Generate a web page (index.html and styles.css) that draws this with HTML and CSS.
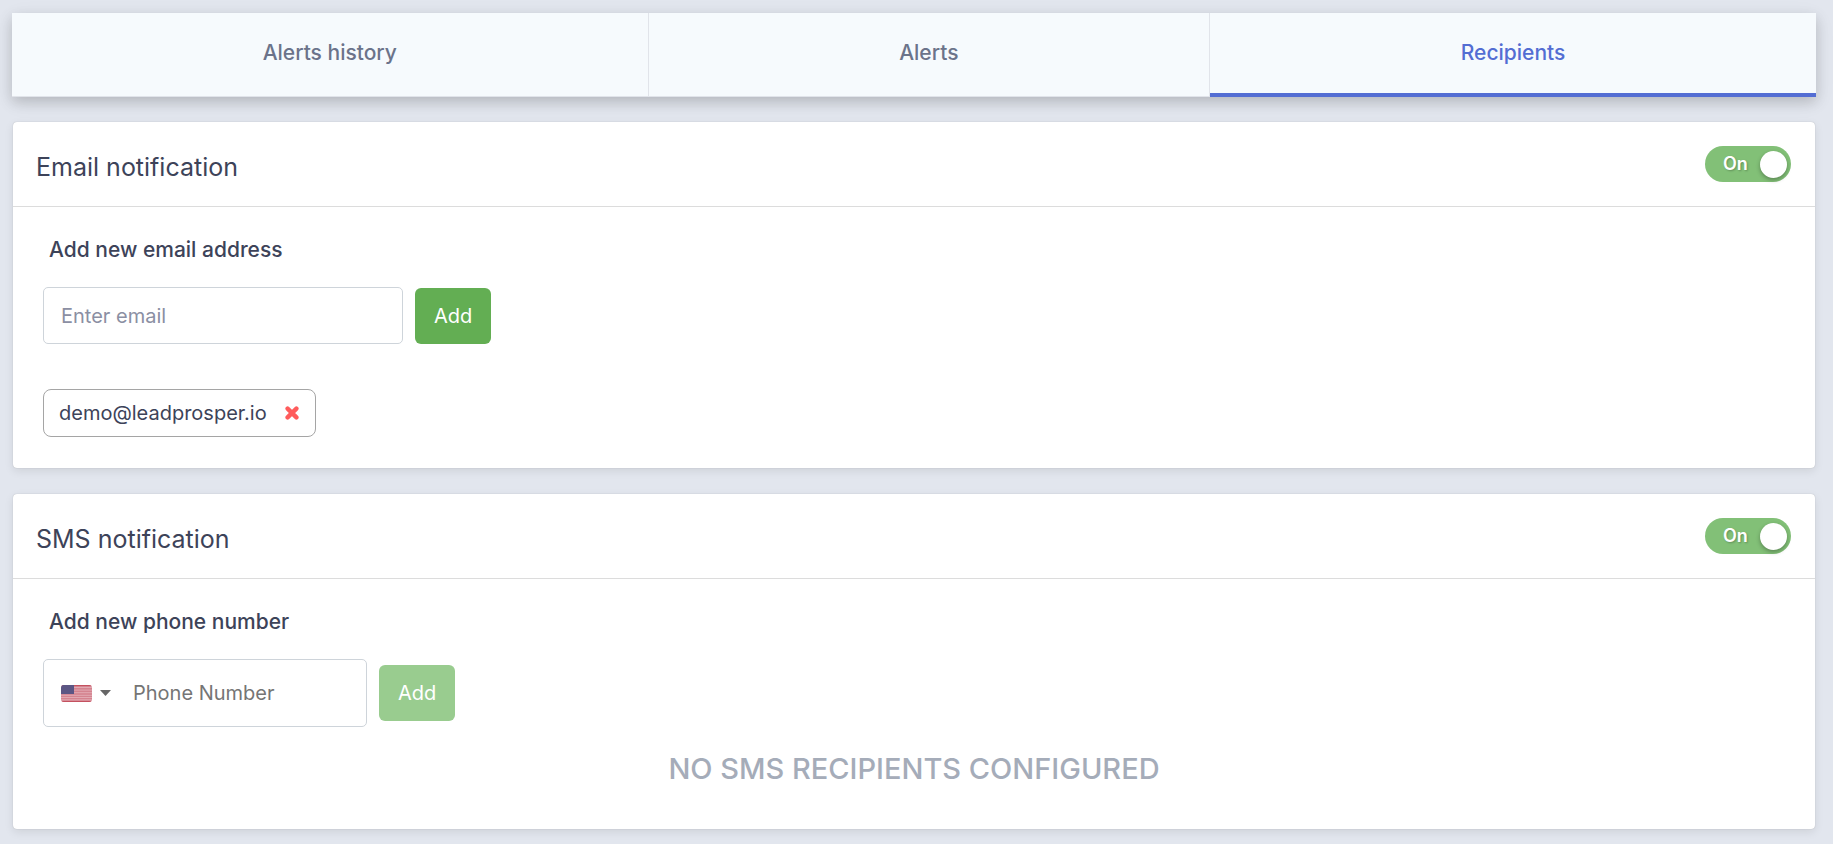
FILE: index.html
```html
<!DOCTYPE html>
<html lang="en">
<head>
    <meta charset="UTF-8">
    <meta name="viewport" content="width=device-width, initial-scale=1">
    <title>Recipients</title>
    <link rel="stylesheet" href="styles.css">
</head>
<body>
    <nav class="tabs">
        <a href="#history" class="tab">Alerts history</a>
        <a href="#alerts" class="tab">Alerts</a>
        <a href="#recipients" class="tab active" aria-current="page">Recipients</a>
    </nav>

    <main>
        <!-- Email -->
        <section class="card">
            <div class="card-header">
                <h2>Email notification</h2>
                <label class="switch">
                    <input type="checkbox" aria-label="Email notification" checked>
                    <span class="switch-text">On</span>
                    <span class="switch-knob"></span>
                </label>
            </div>
            <div class="card-body">
                <form class="add-form">
                    <label class="form-label" for="email">Add new email address</label>
                    <div class="form-row">
                        <input type="email" id="email" class="form-control" placeholder="Enter email">
                        <button type="button" class="btn">Add</button>
                    </div>
                </form>
                <div class="chips">
                    <div class="chip">
                        <span>demo@leadprosper.io</span>
                        <button type="button" class="chip-remove" aria-label="Remove">
                            <svg width="14" height="14" viewBox="0 0 14 14">
                                <path d="M2.6 2.6L11.4 11.4M11.4 2.6L2.6 11.4" stroke="#ff5c5c" stroke-width="4.4" stroke-linecap="round"/>
                            </svg>
                        </button>
                    </div>
                </div>
            </div>
        </section>

        <!-- SMS -->
        <section class="card">
            <div class="card-header">
                <h2>SMS notification</h2>
                <label class="switch">
                    <input type="checkbox" aria-label="SMS notification" checked>
                    <span class="switch-text">On</span>
                    <span class="switch-knob"></span>
                </label>
            </div>
            <div class="card-body">
                <form class="add-form">
                    <label class="form-label" for="phone">Add new phone number</label>
                    <div class="form-row">
                        <div class="phone-control">
                            <div class="country">
                                <svg class="flag" width="31" height="17" viewBox="0 0 31 17">
                                    <clipPath id="flag-clip"><rect width="31" height="17" rx="3"/></clipPath>
                                    <g clip-path="url(#flag-clip)">
                                        <rect width="31" height="17" fill="#d4838f"/>
                                        <path d="M0 .5H31M0 16.5H31" stroke="#c4515f"/>
                                        <path d="M0 2.5H31M0 5.1H31M0 7.7H31M0 10.3H31M0 12.5H31M0 14.8H31" stroke="#e6b3bb" stroke-width=".8"/>
                                        <rect width="13" height="9" fill="#5c5684"/>
                                    </g>
                                </svg>
                                <svg class="caret" width="11" height="6" viewBox="0 0 11 6">
                                    <path d="M0 0H11L5.5 6Z" fill="#666"/>
                                </svg>
                                <select aria-label="Country">
                                    <option>United States</option>
                                </select>
                            </div>
                            <input type="tel" id="phone" placeholder="Phone Number">
                        </div>
                        <button type="button" class="btn" disabled>Add</button>
                    </div>
                </form>
                <p class="empty">NO SMS RECIPIENTS CONFIGURED</p>
            </div>
        </section>
    </main>
</body>
</html>
```
FILE: styles.css
```css
* {
    box-sizing: border-box;
}
body {
    margin: 0;
    padding: 13px 17px 15px 12px;
    background-color: #e2e6ee;
    color: #3d4359;
    font-family: Inter, "Liberation Sans", sans-serif;
    font-size: 20px;
    line-height: 30px;
}
input, button, select {
    font: inherit;
}
.tabs {
    display: flex;
    height: 84px;
    margin-bottom: 25px;
    background-color: #f6fafd;
    box-shadow: 0 5px 20px rgba(0,0,0,0.07), 0 5px 12px rgba(0,0,0,0.15);
}
.tab {
    flex: 1 1 auto;
    padding-top: 25px;
    border-right: 1px solid #e1e4ea;
    border-bottom: 1px solid #e1e4ea;
    color: #6b738a;
    font-size: 21px;
    font-weight: 500;
    text-align: center;
    text-decoration: none;
}
.tab.active {
    border-right: 0;
    border-bottom: 4px solid #536dd3;
    color: #536dd3;
}
main {
    display: flex;
    flex-direction: column;
    gap: 26px;
    margin: 0 1px;
}
.card {
    background-color: white;
    border-radius: 4px;
    box-shadow: 0 0 1px rgba(0,0,0,0.25), 0 3px 10px rgba(0,0,0,0.09);
}
.card-header {
    display: flex;
    justify-content: space-between;
    align-items: center;
    height: 85px;
    padding: 0 24px 0 23px;
    border-bottom: 1px solid #dcdcdc;
}
h2 {
    margin: 5px 0 0;
    font-size: 25px;
    font-weight: 400;
    line-height: 40px;
}
.switch {
    display: flex;
    justify-content: space-between;
    align-items: center;
    width: 86px;
    height: 36px;
    padding: 0 4px 0 18px;
    border-radius: 18px;
    background-color: #82c077;
    cursor: pointer;
}
.switch input {
    position: absolute;
    opacity: 0;
}
.switch-text {
    color: white;
    font-size: 18px;
    font-weight: 600;
    text-shadow: 1px 1px 2px rgba(0,0,0,0.25);
}
.switch-knob {
    width: 27px;
    height: 27px;
    border-radius: 50%;
    background-color: white;
    box-shadow: 0 2px 4px rgba(0,0,0,0.3);
}
.card-body {
    padding: 28px 30px 31px;
}
.form-label {
    display: block;
    margin: 0 6px 22px;
    font-size: 21px;
    font-weight: 500;
}
.form-row {
    display: flex;
    align-items: center;
    gap: 12px;
}
.form-control,
.phone-control {
    border: 1px solid #ced4da;
    border-radius: 5px;
    background-color: white;
}
.form-control {
    width: 360px;
    height: 57px;
    padding: 0 17px;
}
.form-control::placeholder {
    color: #8b8fa3;
    opacity: 1;
}
.btn {
    height: 56px;
    padding: 0 19px;
    border: 0;
    border-radius: 6px;
    background-color: #63ae53;
    color: white;
}
.btn:disabled {
    background-color: #99cc8f;
}
.chips {
    display: flex;
    margin-top: 45px;
}
.chip {
    display: flex;
    align-items: center;
    gap: 18px;
    height: 48px;
    padding: 0 16px 0 15px;
    border: 1px solid #a5a5a5;
    border-radius: 8px;
}
.chip-remove {
    display: flex;
    padding: 0;
    border: 0;
    background: none;
}
.phone-control {
    display: flex;
    align-items: center;
    gap: 22px;
    width: 324px;
    height: 68px;
    padding: 0 17px;
}
.phone-control input {
    flex: 1;
    min-width: 0;
    padding: 0;
    border: 0;
}
.phone-control input::placeholder {
    color: #757575;
    opacity: 1;
}
.country {
    display: flex;
    align-items: center;
    gap: 8px;
    position: relative;
}
/* native select sits on top of the flag */
.country select {
    position: absolute;
    inset: 0;
    width: 100%;
    opacity: 0;
}
.empty {
    margin: 22px 0 9px;
    color: #a5acb9;
    font-size: 29px;
    font-weight: 500;
    line-height: 40px;
    text-align: center;
}
```
